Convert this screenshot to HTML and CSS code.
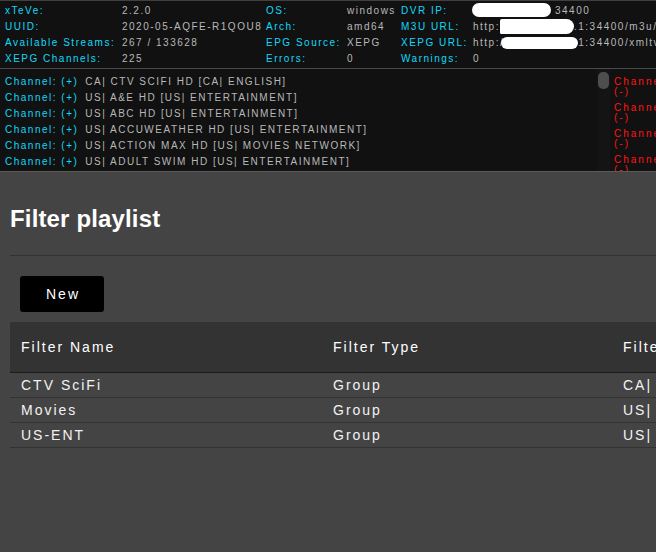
FILE: index.html
```html
<!DOCTYPE html>
<html lang="en">
<head>
<meta charset="utf-8">
<title>xTeVe - Filter</title>
<link rel="stylesheet" href="styles.css">
</head>
<body>
<div class="page">
  <header class="top">
    <div class="info">
      <span class="lbl">xTeVe:</span><span class="val">2.2.0</span>
      <span class="lbl">OS:</span><span class="val">windows</span>
      <span class="lbl">DVR IP:</span><span class="val"><span class="redact r1"></span>34400</span>

      <span class="lbl">UUID:</span><span class="val">2020-05-AQFE-R1QOU8</span>
      <span class="lbl">Arch:</span><span class="val">amd64</span>
      <span class="lbl">M3U URL:</span><span class="val">http:<span class="redact r2"></span>.1:34400/m3u/</span>

      <span class="lbl">Available Streams:</span><span class="val">267 / 133628</span>
      <span class="lbl">EPG Source:</span><span class="val">XEPG</span>
      <span class="lbl">XEPG URL:</span><span class="val">http:/<span class="redact r3"></span>1:34400/xmltv</span>

      <span class="lbl">XEPG Channels:</span><span class="val">225</span>
      <span class="lbl">Errors:</span><span class="val">0</span>
      <span class="lbl">Warnings:</span><span class="val">0</span>
    </div>
    <div class="logwrap">
      <div class="log">
        <div class="logrow"><span class="add">Channel: (+)</span><span class="item">CA| CTV SCIFI HD [CA| ENGLISH]</span></div>
        <div class="logrow"><span class="add">Channel: (+)</span><span class="item">US| A&amp;E HD [US| ENTERTAINMENT]</span></div>
        <div class="logrow"><span class="add">Channel: (+)</span><span class="item">US| ABC HD [US| ENTERTAINMENT]</span></div>
        <div class="logrow"><span class="add">Channel: (+)</span><span class="item">US| ACCUWEATHER HD [US| ENTERTAINMENT]</span></div>
        <div class="logrow"><span class="add">Channel: (+)</span><span class="item">US| ACTION MAX HD [US| MOVIES NETWORK]</span></div>
        <div class="logrow"><span class="add">Channel: (+)</span><span class="item">US| ADULT SWIM HD [US| ENTERTAINMENT]</span></div>
      </div>
      <div class="scroll"><div class="thumb"></div></div>
      <div class="errlog">
        <div class="errrow">Channel: (-)</div>
        <div class="errrow">Channel: (-)</div>
        <div class="errrow">Channel: (-)</div>
        <div class="errrow">Channel: (-)</div>
      </div>
    </div>
  </header>

  <main class="content">
    <h1 class="title">Filter playlist</h1>
    <hr class="sep">
    <button class="btn" type="button">New</button>
    <table class="filters">
      <thead>
        <tr>
          <th class="c1">Filter Name</th>
          <th class="c2">Filter Type</th>
          <th class="c3">Filter</th>
        </tr>
      </thead>
      <tbody>
        <tr><td>CTV SciFi</td><td>Group</td><td>CA|</td></tr>
        <tr><td>Movies</td><td>Group</td><td>US|</td></tr>
        <tr><td>US-ENT</td><td>Group</td><td>US|</td></tr>
      </tbody>
    </table>
  </main>
</div>
</body>
</html>
```

FILE: styles.css
```css
html, body {
  margin: 0;
  padding: 0;
  overflow: hidden;
  background: #444444;
  font-family: "Liberation Sans", Arial, sans-serif;
}

.page {
  width: 1000px;
  min-height: 552px;
  background: #444444;
}

/* ---------- top dashboard ---------- */
.top {
  background: #111111;
  border-top: 1px solid #404040;
  font-size: 10px;
  letter-spacing: 1.5px;
}

.info {
  display: grid;
  grid-template-columns: 117px 144px 81px 54px 72px 400px;
  grid-auto-rows: 16px;
  line-height: 16px;
  padding: 2px 0 1px 5px;
  border-bottom: 1px solid #4a4a4a;
  white-space: nowrap;
}

.lbl {
  color: #10d8f8;
}

.val {
  color: #b8b8b8;
}

.redact {
  display: inline-block;
  vertical-align: top;
  height: 14px;
  background: #ffffff;
  border-radius: 999px;
}

.r1 {
  width: 79px;
  margin: 0 4px 0 -1px;
}

.r2 {
  width: 74px;
  height: 15px;
  border-radius: 10px 40px 40px 8px;
}

.r3 {
  width: 77px;
  height: 12px;
  margin: 2px 0 0 -3px;
}

.logwrap {
  display: flex;
  height: 102px;
  overflow: hidden;
  border-bottom: 1px solid #5a5a5a;
}

.log {
  width: 591px;
  padding: 5px 0 0 5px;
  line-height: 16px;
  white-space: nowrap;
}

.add {
  color: #10d8f8;
  margin-right: 7px;
}

.item {
  color: #b8b8b8;
}

.scroll {
  width: 13px;
  margin-left: 1px;
  background: #141414;
  padding-top: 3px;
}

.thumb {
  width: 11px;
  height: 17px;
  margin-left: 1px;
  background: #4e4e4e;
  border-radius: 5px;
}

.errlog {
  width: 70px;
  padding: 5px 0 0 4px;
}

.errrow {
  color: #ff1414;
  line-height: 10px;
  padding: 3px 0;
  letter-spacing: 2px;
}

/* ---------- content ---------- */
.content {
  padding: 0 0 40px 10px;
  background: #444444;
}

.title {
  margin: 0;
  padding-top: 33px;
  font-size: 24px;
  line-height: 28px;
  font-weight: bold;
  color: #ffffff;
  letter-spacing: 0.15px;
}

.sep {
  margin: 22px 0 0 0;
  border: 0;
  height: 1px;
  background: #333333;
}

.btn {
  display: block;
  margin: 20px 0 0 10px;
  width: 84px;
  height: 36px;
  padding: 0 0 0 2px;
  border: 0;
  border-radius: 3px;
  background: #000000;
  color: #ffffff;
  font-family: "Liberation Sans", Arial, sans-serif;
  font-size: 14px;
  letter-spacing: 2px;
}

.filters {
  margin-top: 10px;
  table-layout: fixed;
  width: 913px;
  border-collapse: separate;
  border-spacing: 0;
  font-size: 14px;
  letter-spacing: 2px;
  color: #f2f2f2;
}

.filters th {
  height: 50px;
  padding: 0 0 0 11px;
  text-align: left;
  font-weight: normal;
  color: #ffffff;
  background: #333333;
  border-bottom: 1px solid #1c1c1c;
  white-space: nowrap;
}

.filters td {
  height: 24px;
  padding: 0 0 0 11px;
  border-bottom: 1px solid #333333;
  white-space: nowrap;
}

.c1 { width: 301px; }
.c2 { width: 279px; }
.c3 { width: 300px; }
```
